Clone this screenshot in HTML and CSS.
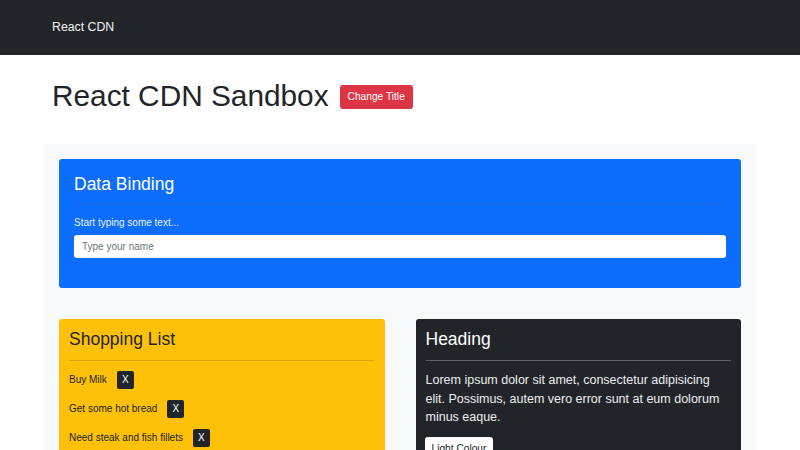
FILE: index.html
```html
<!DOCTYPE html>
<html lang="en">
<head>
<meta charset="utf-8">
<title>React CDN Sandbox</title>
<link rel="stylesheet" href="styles.css">
</head>
<body>
<nav class="navbar">
  <a class="brand" href="#">React CDN</a>
</nav>
<main class="page">
  <div class="title-row">
    <h1 class="title">React CDN Sandbox</h1>
    <button class="btn btn-danger">Change Title</button>
  </div>
  <section class="sandbox">
    <div class="card card-blue">
      <h3 class="card-title">Data Binding</h3>
      <hr class="rule">
      <label class="label" for="name">Start typing some text...</label>
      <input id="name" class="input" type="text" placeholder="Type your name">
    </div>
    <div class="cols">
      <div class="card card-yellow">
        <h3 class="card-title">Shopping List</h3>
        <hr class="rule">
        <ul class="list">
          <li class="item"><span>Buy Milk</span><button class="btn-x">X</button></li>
          <li class="item"><span>Get some hot bread</span><button class="btn-x">X</button></li>
          <li class="item"><span>Need steak and fish fillets</span><button class="btn-x">X</button></li>
        </ul>
      </div>
      <div class="card card-dark">
        <h3 class="card-title">Heading</h3>
        <hr class="rule">
        <p class="text">Lorem ipsum dolor sit amet, consectetur adipisicing elit. Possimus, autem vero error sunt at eum dolorum minus eaque.</p>
        <button class="btn btn-light">Light Colour</button>
      </div>
    </div>
  </section>
</main>
</body>
</html>
```

FILE: styles.css
```css
* { box-sizing: border-box; }
html, body { margin: 0; padding: 0; }
body {
  font-family: "Liberation Sans", Arial, sans-serif;
  font-size: 12.5px;
  line-height: 1.5;
  color: #212529;
  background: #fff;
}
.navbar {
  height: 55px;
  background: #212529;
  display: flex;
  align-items: center;
  padding-left: 52px;
}
.brand {
  color: #f2f2f2;
  font-size: 12.3px;
  text-decoration: none;
}
.page {
  padding: 0 44px;
}
.title-row {
  display: flex;
  align-items: center;
  gap: 11px;
  padding: 0 8px;
  margin: 23px 0 30px;
}
.title {
  margin: 0;
  font-size: 29.8px;
  font-weight: 400;
  line-height: 1.2;
}
.btn {
  font-family: inherit;
  font-size: 10.2px;
  line-height: 1.5;
  height: 24px;
  padding: 0 8px;
  border: 0;
  border-radius: 3px;
  cursor: pointer;
}
.btn-danger {
  background: #dc3545;
  color: #fff;
  margin-top: 2px;
}
.btn-light {
  background: #fff;
  color: #212529;
  padding: 0 7px;
  margin-left: -1px;
}
.sandbox {
  background: #f8f9fa;
  padding: 15px;
  min-height: 320px;
}
.card {
  border-radius: 3px;
}
.card-title {
  margin: 0;
  font-size: 17.5px;
  font-weight: 400;
  line-height: 1.2;
}
.rule {
  margin: 9px 0 10px;
  border: 0;
  height: 1px;
}
.card-blue {
  background: #0d6efd;
  color: #fff;
  padding: 15px 15px 30px;
}
.card-blue .rule { background: #1a66e4; }
.label {
  display: block;
  font-size: 10px;
  line-height: 15px;
  color: #e8f0ff;
  margin-bottom: 5px;
}
.input {
  display: block;
  width: 100%;
  height: 23px;
  border: 0;
  border-radius: 3px;
  padding: 0 8px;
  font-family: inherit;
  font-size: 10px;
  background: #fff;
  color: #212529;
}
.input::placeholder { color: #6c757d; }
.cols {
  display: grid;
  grid-template-columns: 1fr 1fr;
  gap: 31px;
  margin-top: 31px;
}
.card-yellow {
  background: #ffc107;
  color: #212529;
  padding: 10px;
  min-height: 140px;
}
.card-yellow .rule { margin-top: 10px; background: #d9a510; }
.card-dark {
  background: #212529;
  color: #fff;
  padding: 10px;
  min-height: 140px;
}
.card-dark .rule { margin-top: 10px; background: #5f6265; }
.list {
  list-style: none;
  margin: 0;
  padding: 0;
  display: flex;
  flex-direction: column;
  gap: 11px;
}
.item {
  display: flex;
  align-items: center;
  gap: 10px;
  font-size: 10px;
  height: 18px;
}
.btn-x {
  width: 17px;
  height: 18px;
  padding: 0;
  border: 0;
  border-radius: 2px;
  background: #212529;
  color: #fff;
  font-family: inherit;
  font-size: 10px;
}
.text {
  margin: 0 0 9.5px;
  color: #eceef0;
  font-size: 12.5px;
  line-height: 18.75px;
}
```
